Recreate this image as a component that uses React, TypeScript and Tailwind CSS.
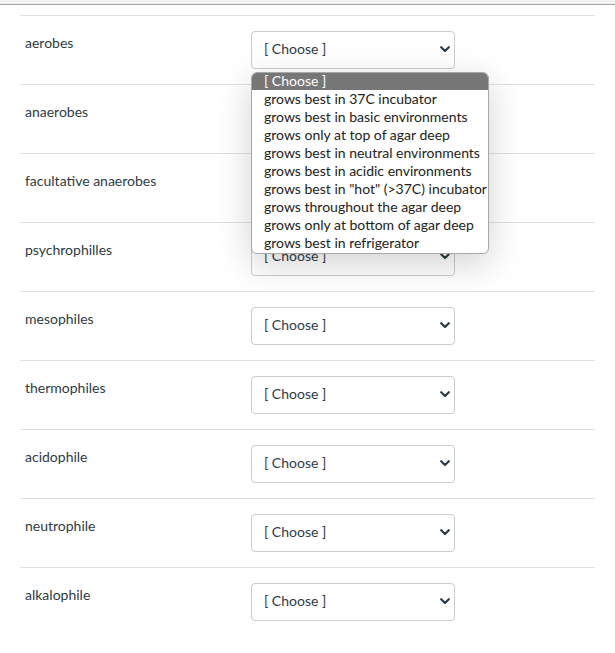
import React from "react";

const rows = [
  "aerobes",
  "anaerobes",
  "facultative anaerobes",
  "psychrophilles",
  "mesophiles",
  "thermophiles",
  "acidophile",
  "neutrophile",
  "alkalophile",
];

const options = [
  "grows best in 37C incubator",
  "grows best in basic environments",
  "grows only at top of agar deep",
  "grows best in neutral environments",
  "grows best in acidic environments",
  'grows best in "hot" (>37C) incubator',
  "grows throughout the agar deep",
  "grows only at bottom of agar deep",
  "grows best in refrigerator",
];

function Chevron() {
  return (
    <svg width="10" height="7" viewBox="0 0 10 7" className="shrink-0">
      <path d="M1.2 1.2 L5 5 L8.8 1.2" fill="none" stroke="#2d3b45" strokeWidth="2.2" strokeLinecap="round" strokeLinejoin="round" />
    </svg>
  );
}

function Select() {
  return (
    <div className="flex h-[38px] w-[204px] items-center justify-between rounded-[4px] border border-[#c7cdd1] bg-white pb-[2px] pl-[12px] pr-[4px]">
      <span className="text-[14px] leading-[20px] text-[#2d3b45]">[ Choose ]</span>
      <Chevron />
    </div>
  );
}

function Dropdown() {
  return (
    <div className="absolute left-0 top-[41px] z-10 flex w-[238px] flex-col overflow-hidden rounded-[6px] border border-[#a8a8a8] bg-white pb-[1px] shadow-[0_10px_35px_rgba(0,0,0,0.18)]">
      <div className="h-[17px] bg-[#777777] pl-[12px] text-[14px] leading-[16px] text-white">[ Choose ]</div>
      {options.map((o) => (
        <div key={o} className="h-[18px] whitespace-nowrap pl-[12px] text-[14px] leading-[18px] text-[#222]">
          {o}
        </div>
      ))}
    </div>
  );
}

export default function App() {
  return (
    <div className="min-h-[653px] bg-white font-['Lato','Liberation_Sans',sans-serif]">
      <div className="h-[5px] border-b border-[#a5a5a5] bg-[#f2f2f2]" />
      <div className="flex flex-col px-[20px] pt-[10px]">
        {rows.map((label, i) => (
          <div key={label} className="flex h-[69px] border-t border-[#e0e0e0] pt-[15px]">
            <div className="w-[231px] pl-[5px] pt-[2px] text-[14px] leading-[20px] text-[#2d3b45]">{label}</div>
            <div className="relative">
              <Select />
              {i === 0 && <Dropdown />}
            </div>
          </div>
        ))}
      </div>
    </div>
  );
}
